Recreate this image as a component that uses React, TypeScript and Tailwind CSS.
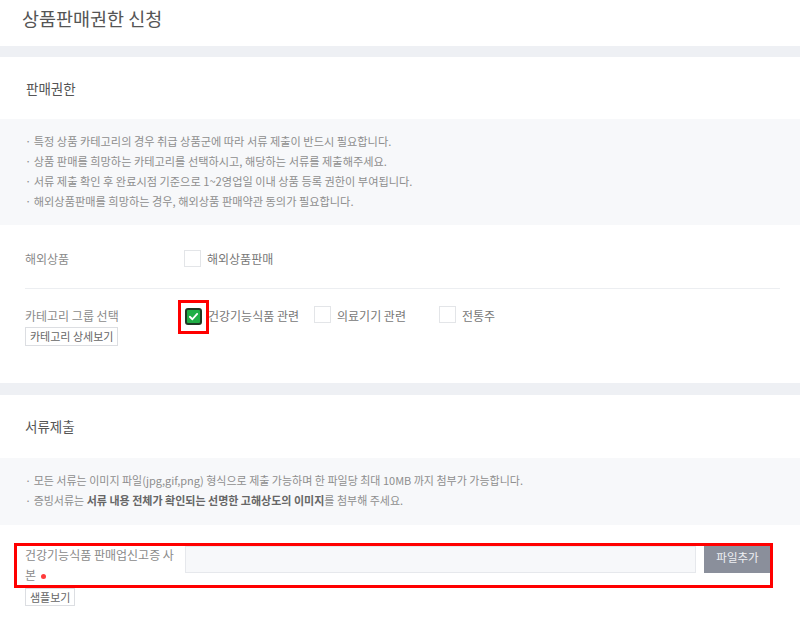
import React from "react";

const font = { fontFamily: '"Noto Sans CJK KR", "Noto Sans", sans-serif' };

function Box({ checked = false }: { checked?: boolean }) {
  if (checked) {
    return (
      <span className="inline-flex h-[17px] w-[17px] items-center justify-center rounded-[3px] border-2 border-[#1f3a25] bg-[#1fae45]">
        <svg width="11" height="11" viewBox="0 0 12 12" fill="none">
          <path d="M2 6.3 L4.8 9 L10 3.2" stroke="white" strokeWidth="2" strokeLinecap="round" strokeLinejoin="round" />
        </svg>
      </span>
    );
  }
  return <span className="inline-block h-[17px] w-[17px] border border-[#e3e5e8] bg-white" />;
}

export default function App() {
  return (
    <div className="w-[800px] h-[640px] overflow-hidden bg-white text-[#777]" style={font}>
      {/* header */}
      <div className="h-[46px] pl-[22px] pt-[4px]">
        <h1 className="text-[18.5px] leading-[28px] text-[#555]">상품판매권한 신청</h1>
      </div>
      <div className="h-[11px] bg-[#eef0f4]" />

      {/* section 1 */}
      <div className="bg-white">
        <div className="h-[62px] flex items-center pl-[26px]">
          <h2 className="text-[13.5px] text-[#555]">판매권한</h2>
        </div>
        <div className="h-[106px] bg-[#f7f8fa] pl-[25px] pt-[12px] text-[11.2px] leading-[20px] text-[#8e8e8e]">
          <p>· 특정 상품 카테고리의 경우 취급 상품군에 따라 서류 제출이 반드시 필요합니다.</p>
          <p>· 상품 판매를 희망하는 카테고리를 선택하시고, 해당하는 서류를 제출해주세요.</p>
          <p>· 서류 제출 확인 후 완료시점 기준으로 1~2영업일 이내 상품 등록 권한이 부여됩니다.</p>
          <p>· 해외상품판매를 희망하는 경우, 해외상품 판매약관 동의가 필요합니다.</p>
        </div>
        <div className="ml-[25px] mr-[20px] flex h-[64px] items-center border-b border-[#eceef1] pt-[4px] text-[12px]">
          <div className="w-[159px] text-[#8a8a8a]">해외상품</div>
          <Box />
          <span className="ml-[6px] text-[#777]">해외상품판매</span>
        </div>
        <div className="ml-[25px] flex h-[94px] pt-[19px] text-[12px]">
          <div className="flex w-[160px] flex-col items-start">
            <div className="leading-[16px] text-[#8a8a8a]">카테고리 그룹 선택</div>
            <button className="mt-[3px] h-[19px] border border-[#dcdee2] px-[4px] text-[11px] leading-[17px] text-[#666]">
              카테고리 상세보기
            </button>
          </div>
          <div className="flex h-[16px] items-center">
            <span className="relative inline-flex">
              <Box checked />
              <span className="absolute left-[-7px] top-[-8px] h-[34px] w-[31px] border-[3px] border-[#ff0000]" />
            </span>
            <span className="ml-[6px] text-[#777]">건강기능식품 관련</span>
            <span className="ml-[15px]"><Box /></span>
            <span className="ml-[6px] text-[#777]">의료기기 관련</span>
            <span className="ml-[33px]"><Box /></span>
            <span className="ml-[6px] text-[#777]">전통주</span>
          </div>
        </div>
      </div>
      <div className="h-[12px] bg-[#eef0f4]" />

      {/* section 2 */}
      <div className="bg-white">
        <div className="h-[63px] flex items-center pl-[25px]">
          <h2 className="text-[13.5px] text-[#555]">서류제출</h2>
        </div>
        <div className="h-[67px] bg-[#f7f8fa] pl-[25px] pt-[12px] text-[11px] leading-[20px] text-[#8e8e8e]">
          <p>· 모든 서류는 이미지 파일(jpg,gif,png) 형식으로 제출 가능하며 한 파일당 최대 10MB 까지 첨부가 가능합니다.</p>
          <p>
            · 증빙서류는 <b className="font-bold text-[#666]">서류 내용 전체가 확인되는 선명한 고해상도의 이미지</b>를 첨부해 주세요.
          </p>
        </div>
        <div className="relative mt-[18px] ml-[25px] mr-[29px] flex h-[45px] items-start">
          <div className="w-[160px] pr-[2px] pt-[2px] text-[12px] leading-[20px] text-[#8a8a8a]">
            건강기능식품 판매업신고증 사본{" "}
            <span className="ml-[2px] inline-block h-[5px] w-[5px] rounded-full bg-[#ff3b3b] align-middle" />
          </div>
          <div className="mt-[3px] h-[27px] flex-1 border border-[#e6e8ec] bg-[#f7f8fa]" />
          <button className="ml-[8px] h-[30px] w-[67px] bg-[#8a8f9b] text-[11.5px] text-[#eef0f3]">파일추가</button>
          <span className="pointer-events-none absolute left-[-11px] right-[-2px] top-0 h-[45px] border-[3px] border-[#ff0000]" />
        </div>
        <div className="ml-[25px] flex">
          <button className="h-[18px] border border-[#dcdee2] bg-white px-[4px] text-[11px] leading-[16px] text-[#666]">샘플보기</button>
        </div>
      </div>
    </div>
  );
}
